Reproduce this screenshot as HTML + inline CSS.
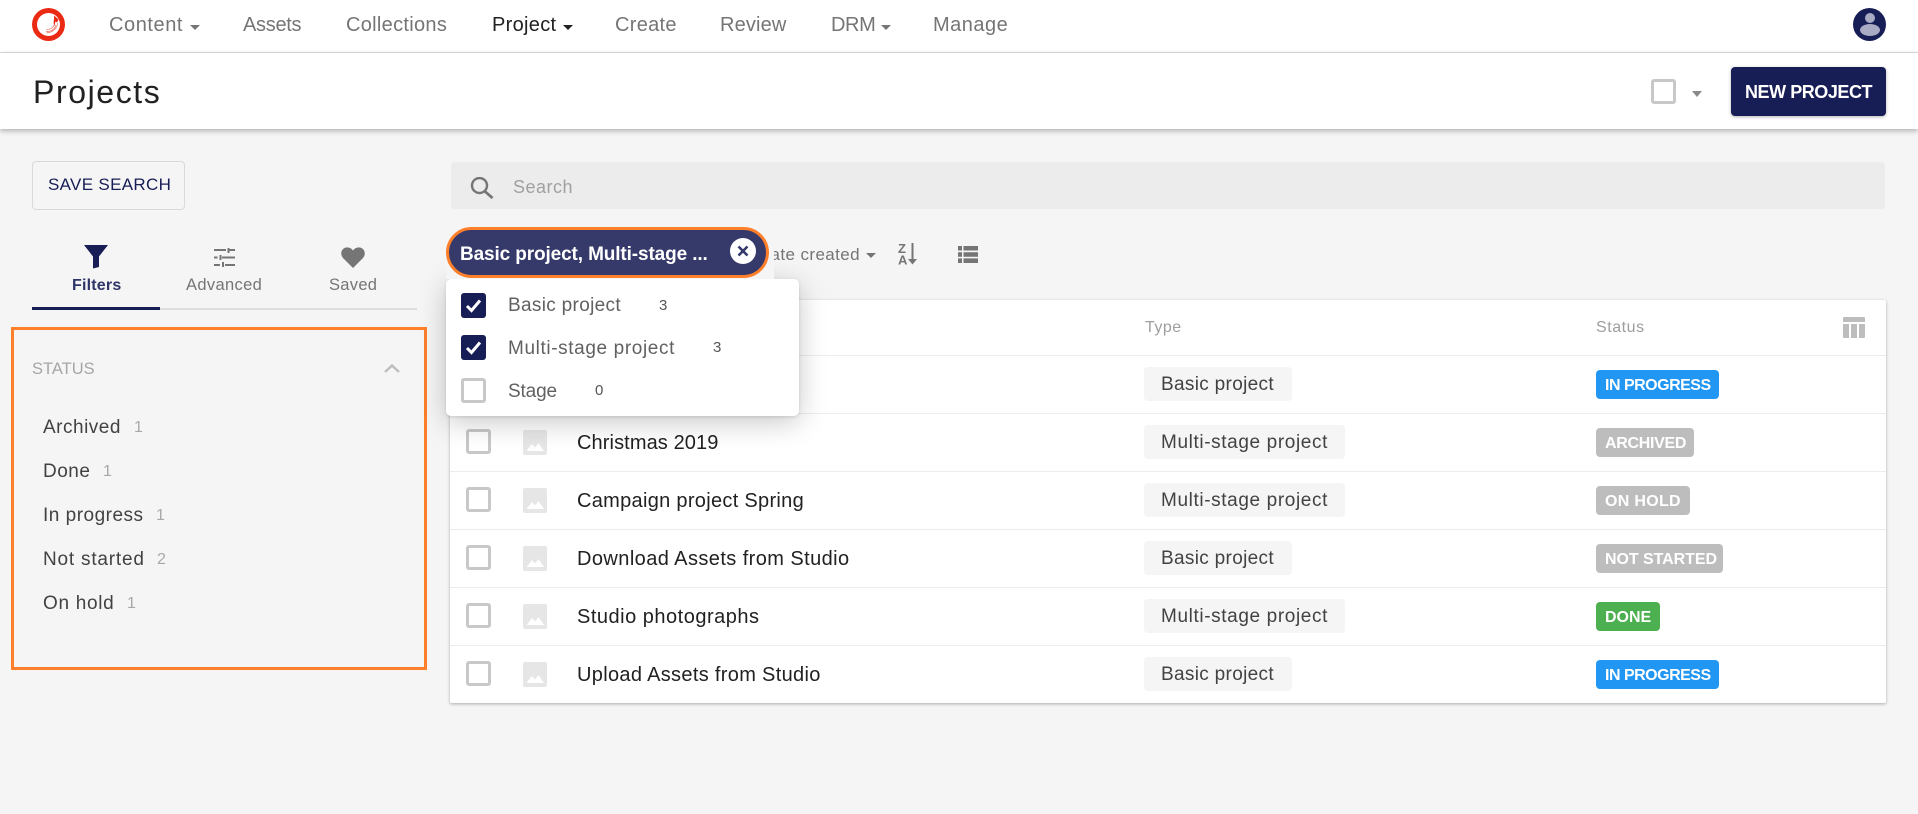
<!DOCTYPE html>
<html lang="en">
<head>
<meta charset="utf-8">
<title>Projects</title>
<style>
html,body{margin:0;padding:0;width:1918px;height:814px;overflow:hidden;background:#f5f5f5;font-family:"Liberation Sans",Arial,sans-serif;color:#212121}
*{box-sizing:border-box}
.a{position:absolute}
.t{position:absolute;white-space:nowrap;height:28px;line-height:28px}
.nav{font-size:20px;color:#757575;top:11px}
.caret{position:absolute;width:0;height:0;border-left:5px solid transparent;border-right:5px solid transparent;border-top:5px solid #757575}
.cb{position:absolute;width:25px;height:25px;border:3px solid #c8c8c8;border-radius:3px;background:#fff}
.cb.on{background:#171d55;border:none}
.thumb{position:absolute;left:523px;width:24px;height:25px;background:#e6e6e6;border-radius:2px}
.name{left:577px;font-size:20px;color:#212121}
.chip{position:absolute;left:1144px;height:34px;background:#f5f5f5;border-radius:4px}
.chipt{left:1161px;font-size:19px;color:#424242;letter-spacing:.32px;margin-top:1px}
.chipt.m{letter-spacing:.62px}
.b{position:absolute;left:1596px;height:29px;border-radius:4px;color:#fff;font-weight:700;font-size:16px;line-height:31px;padding-left:9px;white-space:nowrap}
.line{position:absolute;left:450px;width:1436px;height:1px;background:#ececec}
.fi{left:43px;font-size:19px;color:#424242;letter-spacing:.5px}
.fc{font-size:16px;color:#a8a8a8}
.dd{left:508px;font-size:19px;color:#616161;letter-spacing:.32px;margin-top:1px}
.dc{font-size:15px;color:#555}
</style>
</head>
<body>
<!-- top nav -->
<div class="a" style="left:0;top:0;width:1918px;height:53px;background:#fff;border-bottom:1px solid #dcdcdc"></div>
<svg class="a" style="left:32px;top:8px" width="33" height="33" viewBox="0 0 33 33">
  <circle cx="16.5" cy="16.5" r="16.5" fill="#eb2a13"/>
  <circle cx="16.5" cy="16.5" r="11.5" fill="#fff"/>
  <path d="M22 7.500l4.500 4-1.500 3-1.500-1-1 4.500c-1-2-1-5-.5-6.500z" fill="#eb2a13"/>
  <path d="M24 17c-1 4-5 7-10 6.500M25.500 15c0 5-5 10-11 9.800M22 17c-1 3-4 4.500-7.500 4.500" stroke="#f08070" stroke-width=".8" fill="none"/>
</svg>
<span class="t nav" style="left:109px;letter-spacing:.57px">Content</span><i class="caret" style="left:190px;top:25px"></i>
<span class="t nav" style="left:243px;letter-spacing:-.3px">Assets</span>
<span class="t nav" style="left:346px;letter-spacing:.3px">Collections</span>
<span class="t nav" style="left:492px;letter-spacing:.3px;color:#212121">Project</span><i class="caret" style="left:563px;top:25px;border-top-color:#212121"></i>
<span class="t nav" style="left:615px;letter-spacing:.3px">Create</span>
<span class="t nav" style="left:720px;letter-spacing:.15px">Review</span>
<span class="t nav" style="left:831px;letter-spacing:-.4px">DRM</span><i class="caret" style="left:881px;top:25px"></i>
<span class="t nav" style="left:933px;letter-spacing:.5px">Manage</span>
<svg class="a" style="left:1853px;top:8px" width="33" height="33" viewBox="0 0 33 33">
  <circle cx="16.500" cy="16.500" r="16.500" fill="#171d55"/>
  <circle cx="17" cy="10" r="5" fill="#a9abc4"/>
  <ellipse cx="17" cy="22" rx="10" ry="6" fill="#a9abc4"/>
</svg>

<!-- page header -->
<div class="a" style="left:0;top:53px;width:1918px;height:76px;background:#fff;box-shadow:0 2px 5px rgba(0,0,0,.28)"></div>
<span class="t" style="left:33px;top:74px;height:36px;line-height:36px;font-size:32px;letter-spacing:1.6px;color:#212121">Projects</span>
<div class="cb" style="left:1651px;top:79px"></div>
<i class="caret" style="left:1692px;top:91px;border-top-color:#8a8a8a;border-top-width:6px"></i>
<div class="a" style="left:1731px;top:67px;width:155px;height:49px;background:#171d55;border-radius:4px;box-shadow:0 1px 3px rgba(0,0,0,.3)"></div>
<span class="t" style="left:1745px;top:78px;font-size:18px;font-weight:700;color:#fff;letter-spacing:-.45px">NEW PROJECT</span>

<!-- sidebar -->
<div class="a" style="left:32px;top:161px;width:153px;height:49px;border:1px solid #d9d9d9;border-radius:4px"></div>
<span class="t" style="left:48px;top:171px;font-size:17px;color:#171d55;letter-spacing:.32px">SAVE SEARCH</span>

<svg class="a" style="left:84px;top:245px" width="24" height="24" viewBox="0 0 24 24"><path d="M0 0h24l-9 11.500V22l-6 1.500V11.500z" fill="#171d55"/></svg>
<span class="t" style="left:72px;top:272px;font-size:16px;font-weight:700;color:#2f3566;letter-spacing:.2px">Filters</span>
<svg class="a" style="left:214px;top:248px" width="21" height="19" viewBox="0 0 21 19"><path d="M0 2h12M15 2h6M14.500 0v5M0 9.500h3.500M8 9.500h13M6.500 7v5M0 17h6M11 17h10M9 14v5" stroke="#757575" stroke-width="2" fill="none"/></svg>
<span class="t" style="left:186px;top:271px;font-size:16.500px;color:#757575;letter-spacing:.35px">Advanced</span>
<svg class="a" style="left:341px;top:247px" width="24" height="21" viewBox="0 0 24 21"><path d="M12 21L2 11C-1 7.500 0 2.500 4 .8 7 -.3 10 .8 12 3.500 14 .8 17 -.3 20 .8c4 1.700 5 6.700 2 10.200z" fill="#757575"/></svg>
<span class="t" style="left:329px;top:271px;font-size:16.500px;color:#757575;letter-spacing:.3px">Saved</span>
<div class="a" style="left:160px;top:308px;width:257px;height:2px;background:#ddd"></div>
<div class="a" style="left:32px;top:307px;width:128px;height:3px;background:#171d55"></div>

<div class="a" style="left:11px;top:327px;width:416px;height:343px;border:3px solid #ff7f2a"></div>
<span class="t" style="left:32px;top:355px;font-size:16.500px;color:#a6a6a6">STATUS</span>
<svg class="a" style="left:384px;top:364px" width="16" height="9" viewBox="0 0 16 9"><path d="M1 8l7-6.500L15 8" stroke="#bdbdbd" stroke-width="2.400" fill="none"/></svg>
<span class="t fi" style="top:414px">Archived</span><span class="t fc" style="left:134px;top:414px">1</span>
<span class="t fi" style="top:458px">Done</span><span class="t fc" style="left:103px;top:458px">1</span>
<span class="t fi" style="top:502px">In progress</span><span class="t fc" style="left:156px;top:502px">1</span>
<span class="t fi" style="top:546px;letter-spacing:.8px">Not started</span><span class="t fc" style="left:157px;top:546px">2</span>
<span class="t fi" style="top:590px;letter-spacing:.7px">On hold</span><span class="t fc" style="left:127px;top:590px">1</span>

<!-- search -->
<div class="a" style="left:451px;top:162px;width:1434px;height:47px;background:#ececec;border-radius:4px"></div>
<svg class="a" style="left:470px;top:177px" width="24" height="22" viewBox="0 0 24 22"><circle cx="9.500" cy="8.500" r="7.500" fill="none" stroke="#757575" stroke-width="2.400"/><path d="M14.500 14l8 7" stroke="#757575" stroke-width="2.800"/></svg>
<span class="t" style="left:513px;top:173px;font-size:18px;color:#a0a0a0;letter-spacing:.5px">Search</span>

<!-- toolbar -->
<span class="t" style="right:1058px;top:241px;font-size:17px;color:#757575;letter-spacing:.4px">Date created</span>
<i class="caret" style="left:866px;top:253px"></i>
<svg class="a" style="left:898px;top:243px" width="20" height="22" viewBox="0 0 20 22"><text x="0" y="10" font-family="Liberation Sans,sans-serif" font-size="13" font-weight="700" fill="#757575">Z</text><text x="0" y="21.500" font-family="Liberation Sans,sans-serif" font-size="13" font-weight="700" fill="#757575">A</text><path d="M14.500 0v17" stroke="#757575" stroke-width="2"/><path d="M10 16h9l-4.500 5.500z" fill="#757575"/></svg>
<svg class="a" style="left:958px;top:246px" width="20" height="17" viewBox="0 0 20 17"><path d="M0 0h4v4.500H0zM5.500 0H20v4.500H5.500zM0 6.200h4v4.500H0zM5.500 6.200H20v4.500H5.500zM0 12.400h4V17H0zM5.500 12.400H20V17H5.500z" fill="#757575"/></svg>

<!-- table card -->
<div class="a" style="left:450px;top:300px;width:1436px;height:403px;background:#fff;border-radius:2px;box-shadow:0 1px 3px rgba(0,0,0,.3)"></div>
<span class="t" style="left:1145px;top:314px;font-size:16px;color:#9e9e9e;letter-spacing:.5px">Type</span>
<span class="t" style="left:1596px;top:314px;font-size:16px;color:#9e9e9e;letter-spacing:.55px">Status</span>
<svg class="a" style="left:1843px;top:317px" width="22" height="21" viewBox="0 0 22 21"><path d="M1 0h20a1 1 0 0 1 1 1v4H0V1a1 1 0 0 1 1-1zM0 7h6v14H1a1 1 0 0 1-1-1zM8 7h6v14H8zM16 7h6v13a1 1 0 0 1-1 1h-5z" fill="#bdbdbd"/></svg>
<div class="line" style="top:355px"></div>
<div class="line" style="top:413px"></div>
<div class="line" style="top:471px"></div>
<div class="line" style="top:529px"></div>
<div class="line" style="top:587px"></div>
<div class="line" style="top:645px"></div>

<!-- row 1 (name hidden under dropdown) -->
<div class="chip" style="top:367px;width:148px"></div><span class="t chipt" style="top:370px">Basic project</span>
<div class="b" style="top:370px;width:123px;background:#2196f3;letter-spacing:-.5px">IN PROGRESS</div>
<!-- row 2 -->
<div class="cb" style="left:466px;top:429px"></div>
<div class="thumb" style="top:430px"><svg width="24" height="25" viewBox="0 0 24 25"><path d="M3.500 21L9 14l3 3.500L15.500 13 21 21z" fill="#fff"/></svg></div>
<span class="t name" style="top:429px;letter-spacing:.1px">Christmas 2019</span>
<div class="chip" style="top:425px;width:201px"></div><span class="t chipt m" style="top:428px">Multi-stage project</span>
<div class="b" style="top:428px;width:98px;background:#bdbdbd;letter-spacing:-.3px">ARCHIVED</div>
<!-- row 3 -->
<div class="cb" style="left:466px;top:487px"></div>
<div class="thumb" style="top:488px"><svg width="24" height="25" viewBox="0 0 24 25"><path d="M3.500 21L9 14l3 3.500L15.500 13 21 21z" fill="#fff"/></svg></div>
<span class="t name" style="top:487px;letter-spacing:.3px">Campaign project Spring</span>
<div class="chip" style="top:483px;width:201px"></div><span class="t chipt m" style="top:486px">Multi-stage project</span>
<div class="b" style="top:486px;width:94px;background:#bdbdbd;letter-spacing:.3px">ON HOLD</div>
<!-- row 4 -->
<div class="cb" style="left:466px;top:545px"></div>
<div class="thumb" style="top:546px"><svg width="24" height="25" viewBox="0 0 24 25"><path d="M3.500 21L9 14l3 3.500L15.500 13 21 21z" fill="#fff"/></svg></div>
<span class="t name" style="top:545px;letter-spacing:.42px">Download Assets from Studio</span>
<div class="chip" style="top:541px;width:148px"></div><span class="t chipt" style="top:544px">Basic project</span>
<div class="b" style="top:544px;width:127px;background:#bdbdbd;letter-spacing:-.05px">NOT STARTED</div>
<!-- row 5 -->
<div class="cb" style="left:466px;top:603px"></div>
<div class="thumb" style="top:604px"><svg width="24" height="25" viewBox="0 0 24 25"><path d="M3.500 21L9 14l3 3.500L15.500 13 21 21z" fill="#fff"/></svg></div>
<span class="t name" style="top:603px;letter-spacing:.5px">Studio photographs</span>
<div class="chip" style="top:599px;width:201px"></div><span class="t chipt m" style="top:602px">Multi-stage project</span>
<div class="b" style="top:602px;width:64px;background:#4caf50">DONE</div>
<!-- row 6 -->
<div class="cb" style="left:466px;top:661px"></div>
<div class="thumb" style="top:662px"><svg width="24" height="25" viewBox="0 0 24 25"><path d="M3.500 21L9 14l3 3.500L15.500 13 21 21z" fill="#fff"/></svg></div>
<span class="t name" style="top:661px;letter-spacing:.32px">Upload Assets from Studio</span>
<div class="chip" style="top:657px;width:148px"></div><span class="t chipt" style="top:660px">Basic project</span>
<div class="b" style="top:660px;width:123px;background:#2196f3;letter-spacing:-.5px">IN PROGRESS</div>

<!-- dropdown -->
<div class="a" style="left:446px;top:279px;width:353px;height:137px;background:#fff;border-radius:5px;box-shadow:0 6px 28px rgba(0,0,0,.22),0 1px 3px rgba(0,0,0,.12)"></div>
<div class="cb on" style="left:461px;top:293px"><svg width="25" height="25" viewBox="0 0 25 25"><path d="M6 13l4.500 4.500L19 7.500" stroke="#fff" stroke-width="3" fill="none"/></svg></div>
<span class="t dd" style="top:291px">Basic project</span><span class="t dc" style="left:659px;top:292px">3</span>
<div class="cb on" style="left:461px;top:335px"><svg width="25" height="25" viewBox="0 0 25 25"><path d="M6 13l4.500 4.500L19 7.500" stroke="#fff" stroke-width="3" fill="none"/></svg></div>
<span class="t dd" style="top:334px;letter-spacing:.62px">Multi-stage project</span><span class="t dc" style="left:713px;top:334px">3</span>
<div class="cb" style="left:461px;top:378px"></div>
<span class="t dd" style="top:377px;letter-spacing:-.15px">Stage</span><span class="t dc" style="left:595px;top:377px">0</span>

<!-- active filter pill -->
<div class="a" style="left:446px;top:226px;width:328px;height:53px;background:#f5f5f5"></div>
<div class="a" style="left:446px;top:227px;width:323px;height:51px;background:#363a6a;border:3px solid #ff7f2a;border-radius:26px"></div>
<span class="t" style="left:460px;top:241px;font-size:19px;font-weight:700;color:#fff;letter-spacing:-.12px">Basic project, Multi-stage ...</span>
<svg class="a" style="left:730px;top:238px" width="26" height="26" viewBox="0 0 26 26"><circle cx="13" cy="13" r="13" fill="#fff"/><path d="M8.500 8.500l9 9M17.500 8.500l-9 9" stroke="#363a6a" stroke-width="2.600"/></svg>
</body>
</html>
